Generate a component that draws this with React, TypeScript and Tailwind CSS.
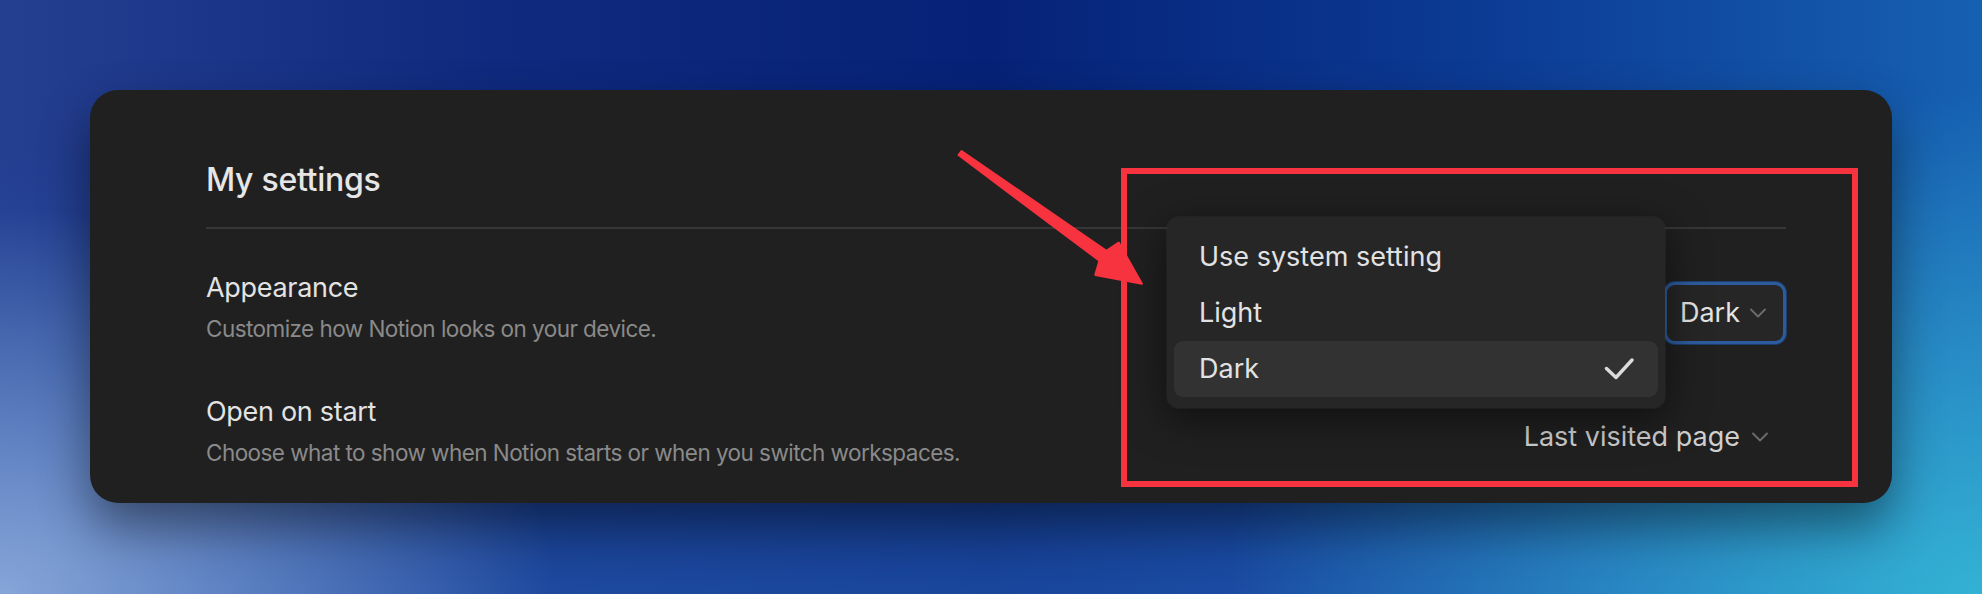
type Option = {
   label: string;
   selected?: boolean;
};

const THEME_OPTIONS: Option[] = [
   { label: "Use system setting" },
   { label: "Light" },
   { label: "Dark", selected: true },
];

const Chevron = () => (
   <svg width="16" height="10" viewBox="0 0 16 10" fill="none">
      <path
         d="M1 1.5 8 8.5 15 1.5"
         stroke="#6c6c6c"
         strokeWidth="1.8"
         strokeLinecap="round"
         strokeLinejoin="round"
      />
   </svg>
);

const Tick = () => (
   <svg width="30" height="22" viewBox="0 0 30 22" fill="none">
      <path
         d="M2.5 10.5 12 19.5 28 2"
         stroke="#dcdcdc"
         strokeWidth="3.4"
         strokeLinecap="round"
         strokeLinejoin="round"
      />
   </svg>
);

// Annotation arrow pointing at the theme menu
const PointerArrow = () => (
   <svg
      className="pointer-events-none absolute inset-0"
      width="1982"
      height="594"
      viewBox="0 0 1982 594"
   >
      <polygon
         points="958.5,155 1099.4,260.7 1095.3,274.9 1141.9,283.8 1118.7,242.5 1106.4,250.9 961.5,151"
         fill="#f7333f"
         stroke="#f7333f"
         strokeWidth="2"
         strokeLinejoin="round"
      />
   </svg>
);

function SettingRow(props: {
   title: string;
   description: string;
   children: React.ReactNode;
}) {
   const { title, description, children } = props;
   return (
      <div className="flex items-center justify-between">
         <div>
            <div className="text-[27px] leading-[32px] tracking-[-0.3px] text-[#e3e3e3]">
               {title}
            </div>
            <div className="mt-[10px] text-[22.5px] leading-[30px] tracking-[-0.55px] text-[#8a8a8a]">
               {description}
            </div>
         </div>
         <div className="mt-[10px]">{children}</div>
      </div>
   );
}

export default function App() {
   return (
      <div className="relative h-[594px] w-full overflow-hidden bg-[radial-gradient(ellipse_28%_65%_at_0%_100%,#86a5d8_0%,rgba(134,165,216,0)_100%),radial-gradient(ellipse_38%_85%_at_100%_100%,#33b2d4_0%,rgba(51,178,212,0)_100%),linear-gradient(180deg,rgba(44,104,190,0)_25%,rgba(44,104,190,0.5)_100%),linear-gradient(90deg,#253f90_0%,#0f2a7e_25%,#062278_50%,#0c3b94_75%,#1660b2_100%)] px-[90px] pt-[90px] font-[family-name:Inter,sans-serif]">
         <div className="relative h-[413px] rounded-[28px] bg-[#202020] pl-[116px] pr-[106px] pt-[70px] shadow-[0_24px_50px_rgba(0,0,0,0.45)]">
            <h1 className="border-b-2 border-[#363636] pb-[27px] text-[32px] font-medium leading-[40px] tracking-[-0.3px] text-[#e6e6e6]">
               My settings
            </h1>

            <div className="mt-[43px] flex flex-col gap-[52px]">
               <SettingRow
                  title="Appearance"
                  description="Customize how Notion looks on your device."
               >
                  <button className="flex h-[62px] items-center gap-[10px] rounded-[11px] border-[3px] border-[#2d5c9e] bg-[#262626] pl-[13px] pr-[17px] text-[27px] text-[#e3e3e3] shadow-[0_0_0_1px_#1d3d6b]">
                     Dark
                     <Chevron />
                  </button>
               </SettingRow>

               <SettingRow
                  title="Open on start"
                  description="Choose what to show when Notion starts or when you switch workspaces."
               >
                  <button className="flex items-center gap-[12px] pl-[13px] pr-[18px] text-[27px] leading-[34px] text-[#cfcfcf]">
                     Last visited page
                     <Chevron />
                  </button>
               </SettingRow>
            </div>

            {/* theme picker, opened */}
            <div className="absolute left-[1077px] top-[127px] w-[498px] rounded-[12px] bg-[#262626] px-[7px] pb-[11px] pt-[12px] shadow-[0_0_0_1px_rgba(255,255,255,0.04),0_10px_40px_rgba(0,0,0,0.55)]">
               {THEME_OPTIONS.map((opt) => (
                  <div
                     key={opt.label}
                     className={
                        opt.selected
                           ? "flex h-[56px] items-center justify-between rounded-[9px] bg-[#323232] pl-[25px] pr-[24px] text-[27px] text-[#e2e2e2]"
                           : "flex h-[56px] items-center justify-between rounded-[9px] pl-[25px] pr-[24px] text-[27px] text-[#e2e2e2]"
                     }
                  >
                     {opt.label}
                     {opt.selected && <Tick />}
                  </div>
               ))}
            </div>

            {/* highlight box */}
            <div className="absolute left-[1031px] top-[78px] h-[319px] w-[737px] border-[6px] border-[#f7333f]" />
         </div>

         <PointerArrow />
      </div>
   );
}
